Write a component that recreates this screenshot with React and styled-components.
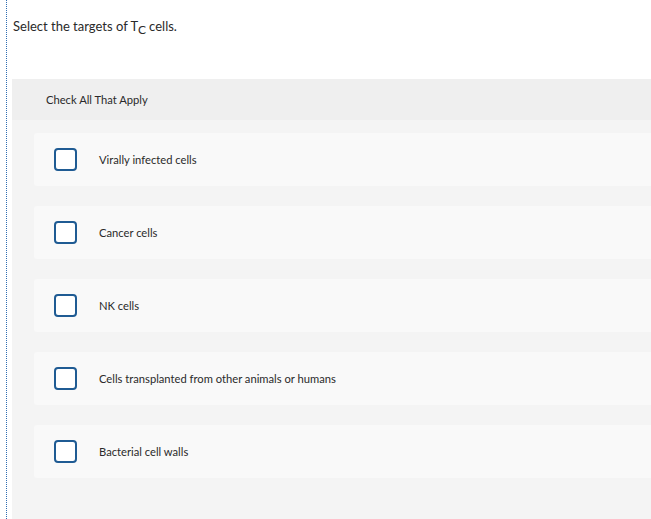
import React from "react";
import styled, { createGlobalStyle } from "styled-components";

const GlobalStyle = createGlobalStyle`
  html, body {
    margin: 0;
    padding: 0;
    background: #fff;
    font-family: Lato, "Open Sans", sans-serif;
    color: #222;
  }
`;

const options = [
  "Virally infected cells",
  "Cancer cells",
  "NK cells",
  "Cells transplanted from other animals or humans",
  "Bacterial cell walls",
];

const Page = styled.div`
  height: 519px;
  overflow: hidden;
  display: flex;
  padding-left: 6px;
`;

const Rule = styled.div`
  width: 0;
  border-left: 1px dotted #2e6db3;
`;

const Main = styled.div`
  flex: 1;
  padding-left: 5px;
  display: flex;
  flex-direction: column;
`;

const Question = styled.p`
  margin: 0;
  padding: 18px 0 0 1px;
  height: 79px;
  box-sizing: border-box;
  font-size: 13px;
  color: #2a2a2a;
`;

const Sub = styled.span`
  font-size: 12px;
  position: relative;
  top: 3px;
  margin-right: 3px;
`;

const Panel = styled.section`
  flex: 1;
  background: #f4f4f4;
`;

const PanelHeader = styled.div`
  height: 41px;
  background: #efefef;
  padding-left: 34px;
  display: flex;
  align-items: center;
  font-size: 11.2px;
  color: #2a2a2a;
`;

const List = styled.div`
  display: flex;
  flex-direction: column;
  gap: 20px;
  padding: 13px 0 0 22px;
`;

const Option = styled.label`
  height: 53px;
  background: #f9f9f9;
  border-radius: 3px 0 0 3px;
  display: flex;
  align-items: center;
  padding-left: 20px;
  font-size: 11.2px;
  color: #2a2a2a;
`;

const Box = styled.span`
  width: 19px;
  height: 19px;
  border: 2px solid #1f5b93;
  border-radius: 4px;
  background: #fff;
  margin-right: 22px;
  flex-shrink: 0;
`;

export default function App() {
  return (
    <>
      <GlobalStyle />
      <Page>
        <Rule />
        <Main>
          <Question>
            Select the targets of T<Sub>C</Sub>cells.
          </Question>
          <Panel>
            <PanelHeader>Check All That Apply</PanelHeader>
            <List>
              {options.map((o) => (
                <Option key={o}>
                  <Box />
                  {o}
                </Option>
              ))}
            </List>
          </Panel>
        </Main>
      </Page>
    </>
  );
}
